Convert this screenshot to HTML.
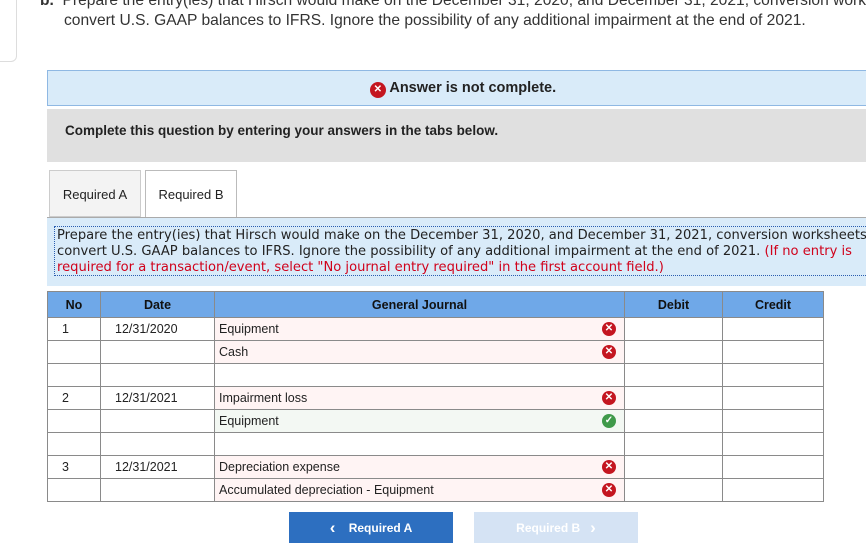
<!DOCTYPE html>
<html><head><style>
body{margin:0;width:866px;height:549px;overflow:hidden;background:#fff;font-family:"Liberation Sans",Arial,sans-serif;position:relative;color:#222}
.a{position:absolute}
.ic{display:inline-block;width:14px;height:14px;border-radius:50%;color:#fff;font-size:10px;line-height:14px;text-align:center;font-weight:bold}
.x{background:#c41620}.ok{background:#3f9a4a}
table{border-collapse:collapse;font-size:12.5px;table-layout:fixed}
td,th{border:1px solid #8a8a8a;height:23px;padding:0 4px;vertical-align:middle;box-sizing:border-box}
td:nth-child(1),td:nth-child(2){padding-left:14px}
th{background:#6fa8e8;font-weight:bold;height:26px;color:#111}
td.r{background:#fff4f4;position:relative}
td.g{background:#f3f8f3;position:relative}
td .ic{position:absolute;right:8px;top:4px}
</style></head><body>
<div class="a" style="left:-10px;top:-10px;width:25px;height:70px;border:1px solid #ddd;border-radius:6px"></div>
<div class="a" style="left:40px;top:-9px;font-size:15.6px;line-height:20px;color:#333;white-space:nowrap"><b>b.</b>&nbsp; Prepare the entry(ies) that Hirsch would make on the December 31, 2020, and December 31, 2021, conversion work<br><span style="padding-left:24px">convert U.S. GAAP balances to IFRS. Ignore the possibility of any additional impairment at the end of 2021.</span></div>
<div class="a" style="left:47px;top:70px;width:830px;height:34px;background:#d9ebf9;border:1px solid #8fb8e3;text-align:center;font-weight:bold;font-size:14.5px;line-height:34px"><span class="ic x" style="width:16px;height:16px;line-height:16px">✕</span> Answer is not complete.</div>
<div class="a" style="left:47px;top:109px;width:830px;height:53px;background:#e0e0e0;font-weight:bold;font-size:13.5px;line-height:44px;padding-left:18px;box-sizing:border-box">Complete this question by entering your answers in the tabs below.</div>
<div class="a" style="left:49px;top:170px;width:92px;height:47px;background:#f3f3f3;border:1px solid #ccc;box-sizing:border-box;font-size:13px;text-align:center;line-height:48px">Required A</div>
<div class="a" style="left:145px;top:170px;width:92px;height:48px;background:#fff;border:1px solid #bbb;border-bottom:none;box-sizing:border-box;font-size:13px;text-align:center;line-height:48px">Required B</div>
<div class="a" style="left:47px;top:217px;width:830px;height:68px;background:#d9ebf9;border-top:1px solid #aaa"></div>
<div class="a" style="left:54px;top:226px;width:830px;height:50px;border:1px dotted #2a5db0;box-sizing:border-box;font-family:'DejaVu Sans',Verdana,sans-serif;font-size:13.1px;line-height:16px;padding:1px 2px;white-space:nowrap;color:#222">Prepare the entry(ies) that Hirsch would make on the December 31, 2020, and December 31, 2021, conversion worksheets<br>convert U.S. GAAP balances to IFRS. Ignore the possibility of any additional impairment at the end of 2021. <span style="color:#d0021b">(If no entry is</span><br><span style="color:#d0021b">required for a transaction/event, select "No journal entry required" in the first account field.)</span></div>
<table class="a" style="left:47px;top:291px;width:776px">
<colgroup><col style="width:53px"><col style="width:114px"><col style="width:410px"><col style="width:98px"><col style="width:101px"></colgroup>
<tr><th>No</th><th>Date</th><th>General Journal</th><th>Debit</th><th>Credit</th></tr>
<tr><td>1</td><td>12/31/2020</td><td class="r">Equipment<span class="ic x">✕</span></td><td></td><td></td></tr>
<tr><td></td><td></td><td class="r">Cash<span class="ic x">✕</span></td><td></td><td></td></tr>
<tr><td></td><td></td><td></td><td></td><td></td></tr>
<tr><td>2</td><td>12/31/2021</td><td class="r">Impairment loss<span class="ic x">✕</span></td><td></td><td></td></tr>
<tr><td></td><td></td><td class="g">Equipment<span class="ic ok">✓</span></td><td></td><td></td></tr>
<tr><td></td><td></td><td></td><td></td><td></td></tr>
<tr><td>3</td><td>12/31/2021</td><td class="r">Depreciation expense<span class="ic x">✕</span></td><td></td><td></td></tr>
<tr><td></td><td></td><td class="r">Accumulated depreciation - Equipment<span class="ic x">✕</span></td><td></td><td></td></tr>
</table>
<div class="a" style="left:289px;top:512px;width:164px;height:31px;background:#2d6fc0;color:#fff;font-size:12px;font-weight:bold;text-align:center;line-height:31px"><span style="font-size:17px;vertical-align:-1px">&lsaquo;</span>&nbsp;&nbsp;&nbsp; Required A</div>
<div class="a" style="left:474px;top:512px;width:164px;height:31px;background:#d5e3f4;color:#fff;font-size:12px;font-weight:bold;text-align:center;line-height:31px">Required B &nbsp;&nbsp;<span style="font-size:17px;vertical-align:-1px">&rsaquo;</span></div>
</body></html>
